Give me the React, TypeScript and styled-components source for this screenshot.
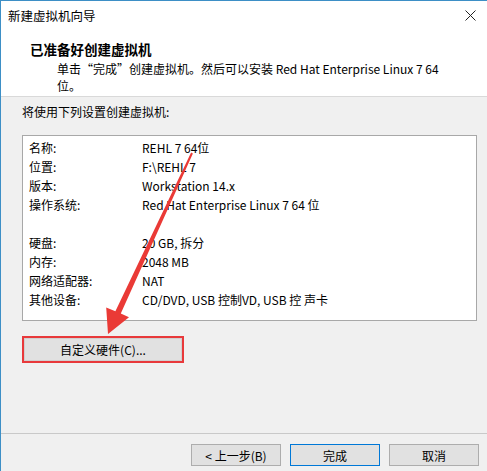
import React from "react";
import styled, { createGlobalStyle } from "styled-components";

const GlobalStyle = createGlobalStyle`
  html, body { margin: 0; padding: 0; background: #ffffff; }
  body { font-family: "Noto Sans CJK SC", "Noto Sans", sans-serif; }
`;

const FONT = `"Noto Sans CJK SC", "Noto Sans", sans-serif`;

const Window = styled.div`
  position: relative;
  width: 487px;
  height: 471px;
  box-sizing: border-box;
  border-top: 1px solid #3d8fc6;
  border-left: 1px solid #3d8fc6;
  display: flex;
  flex-direction: column;
  background: #f0f0f0;
  font-family: ${FONT};
  font-size: 12px;
  color: #000;
  overflow: hidden;
`;

const TitleBar = styled.div`
  height: 29px;
  display: flex;
  align-items: center;
  justify-content: space-between;
  background: #fff;
  padding-left: 7px;
`;

const TitleText = styled.span`
  font-size: 12.5px;
  line-height: 16px;
`;

const CloseBox = styled.div`
  width: 34px;
  height: 29px;
  display: flex;
  align-items: center;
  justify-content: center;
`;

const Header = styled.div`
  background: #fff;
  height: 67px;
  border-bottom: 1px solid #d9d9d9;
  padding: 11px 0 0 29px;
  box-sizing: border-box;
`;

const HeaderTitle = styled.div`
  font-weight: bold;
  font-size: 13.5px;
  line-height: 17px;
`;

const HeaderSub = styled.div`
  padding-left: 27px;
  margin-top: 2px;
  display: flex;
  flex-direction: column;
`;

const SubLine = styled.div`
  line-height: 17px;
`;

const Body = styled.div`
  flex: 1;
  display: flex;
  flex-direction: column;
  padding: 7px 10px 0 21px;
`;

const Intro = styled.div`
  line-height: 16px;
`;

const ListBox = styled.div`
  margin-top: 15px;
  height: 186px;
  box-sizing: border-box;
  border: 1px solid #a8a8a8;
  background: #fff;
  padding: 2px 0 0 6px;
  display: grid;
  grid-template-columns: 113px 1fr;
  grid-auto-rows: 19px;
  align-items: center;
`;

const Label = styled.div`
  line-height: 19px;
`;

const Value = styled.div`
  line-height: 19px;
  white-space: nowrap;
`;

const Spacer = styled.div`
  grid-column: 1 / span 2;
  height: 19px;
`;

const Highlight = styled.div`
  margin-top: 15px;
  width: 162px;
  height: 27px;
  box-sizing: border-box;
  border: 2px solid #e8393b;
`;

const HwButton = styled.button`
  width: 100%;
  height: 100%;
  box-sizing: border-box;
  border: 1px solid #d0d0d0;
  background: #e1e1e1;
  font-family: ${FONT};
  font-size: 12px;
  color: #000;
  padding: 0;
`;

const Footer = styled.div`
  margin-top: auto;
  border-top: 1px solid #c9c9c9;
  height: 38px;
  display: flex;
  justify-content: flex-end;
  align-items: flex-start;
  gap: 9px;
  padding: 10px 8px 0 0;
  box-sizing: border-box;
`;

const NavButton = styled.button<{ $primary?: boolean }>`
  width: 90px;
  height: 22px;
  box-sizing: border-box;
  border: 1px solid ${(p) => (p.$primary ? "#0078d7" : "#adadad")};
  background: #e1e1e1;
  font-family: ${FONT};
  font-size: 12px;
  color: #000;
  padding: 0;
`;

const ArrowLayer = styled.svg`
  position: absolute;
  left: 0;
  top: 0;
  pointer-events: none;
`;

const rows1: [string, string][] = [
  ["名称:", "REHL 7 64位"],
  ["位置:", "F:\\REHL 7"],
  ["版本:", "Workstation 14.x"],
  ["操作系统:", "Red Hat Enterprise Linux 7 64 位"],
];

const rows2: [string, string][] = [
  ["硬盘:", "20 GB, 拆分"],
  ["内存:", "2048 MB"],
  ["网络适配器:", "NAT"],
  ["其他设备:", "CD/DVD, USB 控制VD, USB 控 声卡"],
];

export default function App() {
  return (
    <>
      <GlobalStyle />
      <Window>
        <TitleBar>
          <TitleText>新建虚拟机向导</TitleText>
          <CloseBox>
            <svg width="11" height="11" viewBox="0 0 11 11">
              <path d="M0.5 0.5 L10.5 10.5 M10.5 0.5 L0.5 10.5" stroke="#222" strokeWidth="1" fill="none" />
            </svg>
          </CloseBox>
        </TitleBar>
        <Header>
          <HeaderTitle>已准备好创建虚拟机</HeaderTitle>
          <HeaderSub>
            <SubLine>单击“完成”创建虚拟机。然后可以安装 Red Hat Enterprise Linux 7 64</SubLine>
            <SubLine>位。</SubLine>
          </HeaderSub>
        </Header>
        <Body>
          <Intro>将使用下列设置创建虚拟机:</Intro>
          <ListBox>
            {rows1.map(([l, v]) => (
              <React.Fragment key={l}>
                <Label>{l}</Label>
                <Value>{v}</Value>
              </React.Fragment>
            ))}
            <Spacer />
            {rows2.map(([l, v]) => (
              <React.Fragment key={l}>
                <Label>{l}</Label>
                <Value>{v}</Value>
              </React.Fragment>
            ))}
          </ListBox>
          <Highlight>
            <HwButton>自定义硬件(C)...</HwButton>
          </Highlight>
        </Body>
        <Footer>
          <NavButton>&lt; 上一步(B)</NavButton>
          <NavButton $primary>完成</NavButton>
          <NavButton>取消</NavButton>
        </Footer>
        <ArrowLayer width="487" height="471" viewBox="0 0 487 471">
          <polygon
            points="191.9,152.4 119.8,312.5 128.0,316.3 107,333 105.2,306.6 114.4,310.3 190.1,151.6"
            fill="#ea3a36"
          />
        </ArrowLayer>
      </Window>
    </>
  );
}
